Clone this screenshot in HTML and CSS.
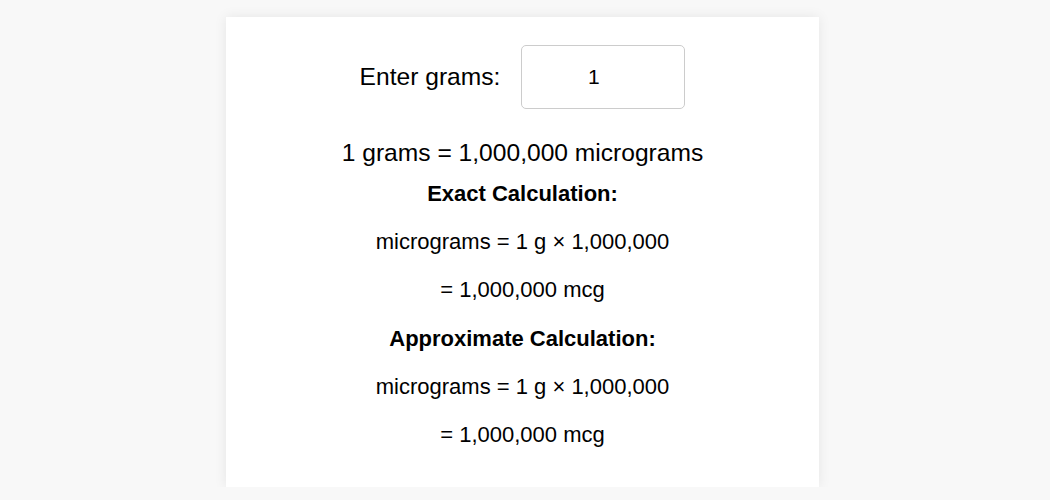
FILE: index.html
```html
<!DOCTYPE html>
<html>
<head>
<meta charset="utf-8">
<link rel="stylesheet" href="styles.css">
</head>
<body>
<div class="page">
  <div class="card">
    <div class="row">
      <label class="label" for="g">Enter grams:</label>
      <input id="g" class="input" type="text" value="1">
    </div>
    <div class="result">1 grams = 1,000,000 micrograms</div>
    <div class="heading">Exact Calculation:</div>
    <p class="line">micrograms = 1 g × 1,000,000</p>
    <p class="line">= 1,000,000 mcg</p>
    <div class="heading">Approximate Calculation:</div>
    <p class="line">micrograms = 1 g × 1,000,000</p>
    <p class="line">= 1,000,000 mcg</p>
  </div>
</div>
</body>
</html>
```

FILE: styles.css
```css
html, body {
  margin: 0;
  padding: 0;
  background: #f8f8f8;
  font-family: "Liberation Sans", Arial, sans-serif;
  color: #000;
}
.page {
  display: flex;
  justify-content: center;
  padding: 17px 5px 0 0;
}
.card {
  width: 593px;
  height: 470px;
  box-sizing: border-box;
  background: #fff;
  box-shadow: 0 0 12px rgba(0, 0, 0, 0.08);
  padding: 28px 20px 0;
  display: flex;
  flex-direction: column;
  align-items: center;
  text-align: center;
}
.row {
  display: flex;
  align-items: center;
  gap: 21px;
}
.label {
  font-size: 24.6px;
  line-height: 28px;
}
.input {
  width: 164px;
  height: 64px;
  box-sizing: border-box;
  border: 1px solid #ccc;
  border-radius: 5px;
  font-family: "Liberation Sans", Arial, sans-serif;
  font-size: 21px;
  text-align: center;
  color: #000;
  padding: 0 19px 0 0;
  outline: none;
  background: #fff;
}
.result {
  margin-top: 30px;
  font-size: 24.6px;
  line-height: 28px;
}
.heading {
  margin-top: 14px;
  font-size: 22px;
  font-weight: bold;
  line-height: 26px;
}
.line {
  margin: 22px 0 0;
  font-size: 22px;
  line-height: 26.3px;
}
.line + .heading {
  margin-top: 22px;
}
```
